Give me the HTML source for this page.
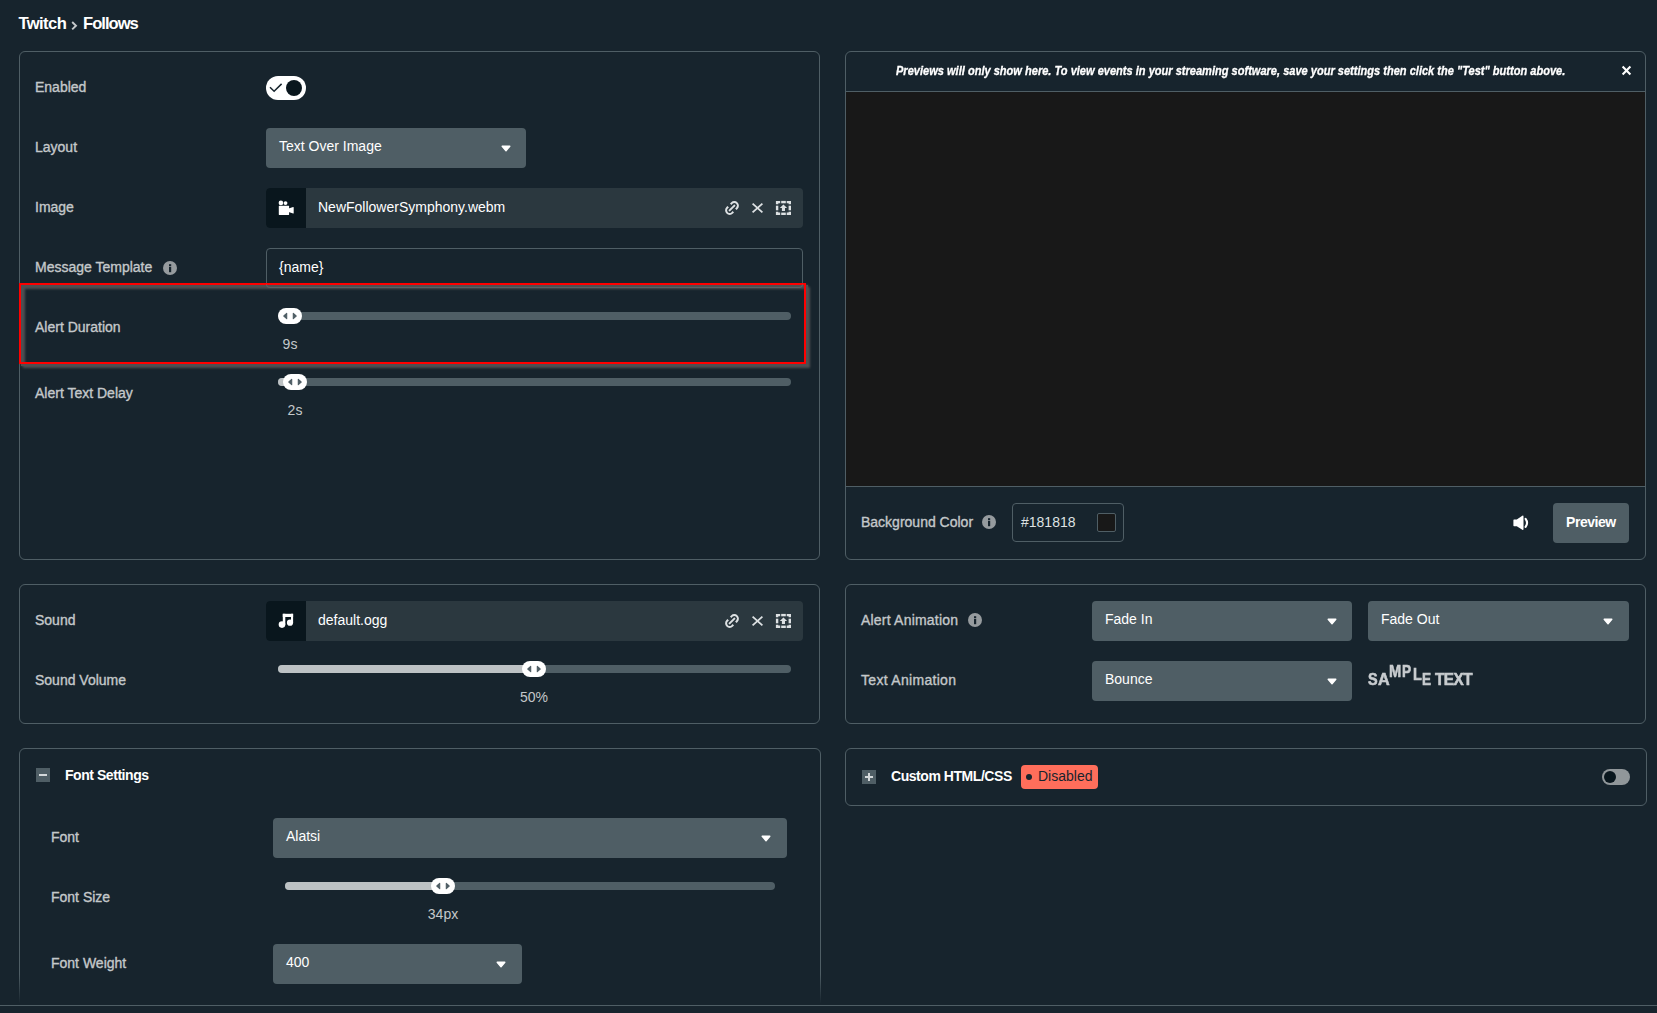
<!DOCTYPE html>
<html><head><meta charset="utf-8">
<style>
*{box-sizing:border-box;margin:0;padding:0}
html,body{width:1657px;height:1013px;overflow:hidden;background:#17242d;font-family:"Liberation Sans",sans-serif;color:#fff}
.a{position:absolute}
svg.a{overflow:visible}
.t{position:absolute;white-space:nowrap;line-height:16px;font-size:14px}
.b{font-weight:bold;letter-spacing:-0.45px}
.lbl{color:#c4c8ca;-webkit-text-stroke:0.35px #c4c8ca}
.panel{position:absolute;border:1px solid #4f5e65;border-radius:6px}
.sel{position:absolute;background:#4f5e65;border-radius:4px}
.track{position:absolute;height:8px;border-radius:4px;background:#4f5e65}
.fill{position:absolute;height:8px;border-radius:4px;background:#bdc2c4}
.knob{position:absolute;width:24px;height:16px;border-radius:8px;background:#fff}
.val{position:absolute;white-space:nowrap;line-height:16px;font-size:14px;color:#c4c8ca;text-align:center;width:60px}
.media{position:absolute;background:#2b383f;border-radius:4px}
.mico{position:absolute;left:0;top:0;width:40px;height:40px;background:#09161d;border-radius:4px 0 0 4px}
</style></head><body>

<svg width="0" height="0" style="position:absolute">
<defs>
<symbol id="caret" viewBox="0 0 10 7"><path d="M1.2 1.2 H8.8 L5 5.8 Z" fill="#fff" stroke="#fff" stroke-width="1.4" stroke-linejoin="round"/></symbol>
<symbol id="knobarrows" viewBox="0 0 24 16"><path d="M8.7 5.3 V10.7 L5.8 8 Z M15.3 5.3 V10.7 L18.2 8 Z" fill="#4f5e65" stroke="#4f5e65" stroke-width="1.1" stroke-linejoin="round"/></symbol>
<symbol id="info" viewBox="0 0 14 14"><circle cx="7" cy="7" r="7" fill="#969b9e"/><rect x="6" y="3.2" width="2.2" height="2" fill="#17242d"/><rect x="6" y="5.9" width="2.2" height="5.3" fill="#17242d"/></symbol>
<symbol id="mediaicons" viewBox="0 0 80 24">
  <g fill="none" stroke="#dde1e3" stroke-width="2" stroke-linecap="round">
    <path d="M10.7 8.2 L11.75 7.15 A3.6 3.6 0 0 1 16.85 12.25 L15.8 13.3" stroke-linecap="butt"/>
    <path d="M13.3 15.8 L12.25 16.85 A3.6 3.6 0 0 1 7.15 11.75 L8.2 10.7" stroke-linecap="butt"/>
    <path d="M9.6 14.4 L14.4 9.6"/>
    <path d="M32.6 7.6 L42.4 16.4 M42.4 7.6 L32.6 16.4" stroke-width="1.8" stroke-linecap="butt"/>
  </g>
  <g fill="#dde1e3">
    <path d="M55.9 4.9 H60.2 V7.3 H58.3 V8.2 H55.9 Z"/>
    <rect x="61.2" y="4.9" width="4.6" height="2.4"/>
    <path d="M66.7 4.9 H71 V8.2 H68.6 V7.3 H66.7 Z"/>
    <rect x="55.9" y="9.7" width="2.4" height="4.6"/>
    <rect x="68.6" y="9.7" width="2.4" height="4.6"/>
    <path d="M55.9 15.8 H58.3 V16.6 H60.2 V19 H55.9 Z"/>
    <rect x="61.2" y="16.6" width="4.6" height="2.4"/>
    <path d="M68.6 15.8 H71 V19 H66.7 V16.6 H68.6 Z"/>
    <path d="M63.45 8.5 L67.1 12.1 H65 V15 H61.9 V12.1 H59.8 Z"/>
  </g>
</symbol>
</defs>
</svg>

<!-- breadcrumb -->
<div class="t b" style="left:18.5px;top:16px;font-size:16.6px;letter-spacing:-0.6px">Twitch</div>
<svg class="a" style="left:70px;top:19.5px" width="9" height="11" viewBox="0 0 9 11"><path d="M2.2 2 L6 5.7 L2.2 9.4" fill="none" stroke="#c6c9cb" stroke-width="1.9"/></svg>
<div class="t b" style="left:83px;top:16px;font-size:16.6px;letter-spacing:-1px">Follows</div>

<!-- PANEL 1 LEFT -->
<div class="panel" style="left:19px;top:51px;width:801px;height:509px"></div>
<div class="t lbl" style="left:35px;top:79px">Enabled</div>
<div class="a" style="left:266px;top:76px;width:40px;height:24px;border-radius:12px;background:#fff"></div>
<div class="a" style="left:286px;top:80px;width:16px;height:16px;border-radius:8px;background:#09161d"></div>
<svg class="a" style="left:266px;top:76px" width="40" height="24" viewBox="0 0 40 24"><path d="M4 11.3 L8.1 15.2 L15.6 7.9" fill="none" stroke="#17242d" stroke-width="1.5"/></svg>

<div class="t lbl" style="left:35px;top:139px">Layout</div>
<div class="sel" style="left:266px;top:128px;width:260px;height:40px"></div>
<div class="t" style="left:279px;top:138px">Text Over Image</div>
<svg class="a" style="left:500.5px;top:145px" width="10" height="7"><use href="#caret"/></svg>

<div class="t lbl" style="left:35px;top:199px">Image</div>
<div class="media" style="left:266px;top:188px;width:537px;height:40px"><div class="mico"></div></div>
<svg class="a" style="left:272px;top:196px" width="28" height="24" viewBox="0 0 28 24">
  <g fill="#fff"><circle cx="8.9" cy="6.9" r="2.3"/><circle cx="13.5" cy="7.1" r="1.95"/><rect x="6.8" y="9.7" width="10.3" height="9.3" rx="0.4"/><path d="M16.6 12.6 L21.1 10.9 Q21.7 10.8 21.7 11.4 V17.1 Q21.7 17.7 21.1 17.6 L16.6 15.9 Z"/></g>
</svg>
<div class="t" style="left:318px;top:199px">NewFollowerSymphony.webm</div>
<svg class="a" style="left:720px;top:196px" width="80" height="24"><use href="#mediaicons"/></svg>

<div class="t lbl" style="left:35px;top:259px">Message Template</div>
<svg class="a" style="left:162.5px;top:261px" width="14" height="14"><use href="#info"/></svg>
<div class="a" style="left:266px;top:248px;width:537px;height:40px;border:1px solid #4f5e65;border-radius:4px"></div>
<div class="t" style="left:279px;top:259px">{name}</div>

<div class="t lbl" style="left:35px;top:319px">Alert Duration</div>
<div class="track" style="left:278px;top:312px;width:513px"></div>
<div class="knob" style="left:278px;top:308px"><svg width="24" height="16"><use href="#knobarrows"/></svg></div>
<div class="val" style="left:260px;top:336px">9s</div>

<div class="t lbl" style="left:35px;top:385px">Alert Text Delay</div>
<div class="track" style="left:278px;top:378px;width:513px"></div>
<div class="fill" style="left:278px;top:378px;width:16px"></div>
<div class="knob" style="left:283px;top:374px"><svg width="24" height="16"><use href="#knobarrows"/></svg></div>
<div class="val" style="left:265px;top:402px">2s</div>

<!-- red highlight -->
<div class="a" style="left:19px;top:283px;width:787px;height:81px;border:2px solid #f00;filter:drop-shadow(2px 2px 0px #4e4f52) drop-shadow(2px 2px 1.2px #4e4f52)"></div>

<div class="a" style="left:266px;top:284px;width:537px;height:4px;border:1px solid rgba(100,112,118,0.55);border-top:none;border-radius:0 0 4px 4px"></div>

<!-- PANEL 1 RIGHT -->
<div class="panel" style="left:845px;top:51px;width:801px;height:509px;overflow:hidden">
  <div class="a" style="left:0;top:39px;width:799px;height:396px;background:#181818;border-top:1px solid #4f5e65;border-bottom:1px solid #4f5e65"></div>
</div>
<div class="t" style="left:896px;top:63px;font-size:12px;font-weight:bold;font-style:italic;-webkit-text-stroke:0.3px #fff;transform-origin:0 0;transform:scaleX(0.921)">Previews will only show here. To view events in your streaming software, save your settings then click the "Test" button above.</div>
<svg class="a" style="left:1621px;top:65px" width="11" height="11" viewBox="0 0 11 11"><path d="M1.6 1.6 L9.4 9.4 M9.4 1.6 L1.6 9.4" stroke="#fff" stroke-width="2.1"/></svg>

<div class="t lbl" style="left:861px;top:514px">Background Color</div>
<svg class="a" style="left:981.5px;top:515px" width="14" height="14"><use href="#info"/></svg>
<div class="a" style="left:1012px;top:503px;width:112px;height:39px;border:1px solid #4f5e65;border-radius:4px"></div>
<div class="t" style="left:1021px;top:514px;color:#dfe2e3">#181818</div>
<div class="a" style="left:1097px;top:513px;width:19px;height:19px;background:#181818;border:1px solid #4f5e65;border-radius:2px"></div>
<svg class="a" style="left:1508px;top:508px" width="26" height="28" viewBox="1508 508 26 28">
  <path d="M1513.4 520.2 Q1513.4 519.6 1514 519.6 H1516.8 L1522.3 515.8 Q1523.5 515.1 1523.5 516.6 V529 Q1523.5 530.5 1522.3 529.8 L1516.8 526.2 H1514 Q1513.4 526.2 1513.4 525.6 Z" fill="#fff"/>
  <path d="M1525.6 518.9 Q1528.5 522.9 1525.6 526.9" fill="none" stroke="#fff" stroke-width="2.1" stroke-linecap="round"/>
</svg>
<div class="sel" style="left:1553px;top:503px;width:76px;height:40px"></div>
<div class="t b" style="left:1566px;top:514px">Preview</div>

<!-- PANEL 2 LEFT -->
<div class="panel" style="left:19px;top:584px;width:801px;height:140px"></div>
<div class="t lbl" style="left:35px;top:612px">Sound</div>
<div class="media" style="left:266px;top:601px;width:537px;height:40px"><div class="mico"></div></div>
<svg class="a" style="left:272px;top:608px" width="28" height="24" viewBox="0 0 28 24">
  <g fill="#fff"><circle cx="10" cy="16.6" r="3.3"/><rect x="10.8" y="5.8" width="2.5" height="10.8"/><rect x="10.8" y="5.8" width="10.3" height="3.2"/><rect x="19" y="5.8" width="2.1" height="9"/><circle cx="18" cy="14.7" r="3.1"/></g>
</svg>
<div class="t" style="left:318px;top:612px">default.ogg</div>
<svg class="a" style="left:720px;top:609px" width="80" height="24"><use href="#mediaicons"/></svg>
<div class="t lbl" style="left:35px;top:672px">Sound Volume</div>
<div class="track" style="left:278px;top:665px;width:513px"></div>
<div class="fill" style="left:278px;top:665px;width:256px"></div>
<div class="knob" style="left:522px;top:661px"><svg width="24" height="16"><use href="#knobarrows"/></svg></div>
<div class="val" style="left:504px;top:689px">50%</div>

<!-- PANEL 2 RIGHT -->
<div class="panel" style="left:845px;top:584px;width:801px;height:140px"></div>
<div class="t lbl" style="left:861px;top:612px;letter-spacing:0.2px">Alert Animation</div>
<svg class="a" style="left:967.5px;top:613px" width="14" height="14"><use href="#info"/></svg>
<div class="sel" style="left:1092px;top:601px;width:260px;height:40px"></div>
<div class="t" style="left:1105px;top:611px">Fade In</div>
<svg class="a" style="left:1326.5px;top:618px" width="10" height="7"><use href="#caret"/></svg>
<div class="sel" style="left:1368px;top:601px;width:261px;height:40px"></div>
<div class="t" style="left:1381px;top:611px">Fade Out</div>
<svg class="a" style="left:1602.5px;top:618px" width="10" height="7"><use href="#caret"/></svg>
<div class="t lbl" style="left:861px;top:672px;letter-spacing:0.3px">Text Animation</div>
<div class="sel" style="left:1092px;top:661px;width:260px;height:40px"></div>
<div class="t" style="left:1105px;top:671px">Bounce</div>
<svg class="a" style="left:1326.5px;top:678px" width="10" height="7"><use href="#caret"/></svg>
<div class="a" style="left:0;top:0;color:#c8cccf">
  <div class="t" style="left:1368px;top:670px;font-size:17px;line-height:20px;font-weight:bold;-webkit-text-stroke:0.6px #c8cccf;transform:scaleX(0.85);transform-origin:0 0">S</div>
  <div class="t" style="left:1378px;top:670px;font-size:17px;line-height:20px;font-weight:bold;-webkit-text-stroke:0.6px #c8cccf;transform:scaleX(0.95);transform-origin:0 0">A</div>
  <div class="t" style="left:1389px;top:662px;font-size:17px;line-height:20px;font-weight:bold;-webkit-text-stroke:0.6px #c8cccf;transform:scaleX(0.86);transform-origin:0 0">M</div>
  <div class="t" style="left:1402px;top:662px;font-size:17px;line-height:20px;font-weight:bold;-webkit-text-stroke:0.6px #c8cccf;transform:scaleX(0.8);transform-origin:0 0">P</div>
  <div class="t" style="left:1413px;top:665px;font-size:17px;line-height:20px;font-weight:bold;-webkit-text-stroke:0.6px #c8cccf;transform:scaleX(0.85);transform-origin:0 0">L</div>
  <div class="t" style="left:1421.5px;top:670px;font-size:17px;line-height:20px;font-weight:bold;-webkit-text-stroke:0.6px #c8cccf;transform:scaleX(0.8);transform-origin:0 0">E</div>
  <div class="t" style="left:1435px;top:670px;font-size:17px;line-height:20px;font-weight:bold;-webkit-text-stroke:0.6px #c8cccf;transform:scaleX(0.9);transform-origin:0 0;letter-spacing:-0.6px">TEXT</div>
</div>

<!-- PANEL 3 LEFT (clipped) -->
<div class="a" style="left:0;top:0;width:1657px;height:1005px;overflow:hidden">
<div class="panel" style="left:19px;top:748px;width:802px;height:400px"></div>
<div class="a" style="left:36px;top:768px;width:14px;height:14px;background:#4f5e65"></div>
<div class="a" style="left:39px;top:774px;width:8px;height:2px;background:#d4d8da"></div>
<div class="t b" style="left:65px;top:767px">Font Settings</div>
<div class="t lbl" style="left:51px;top:829px">Font</div>
<div class="sel" style="left:273px;top:818px;width:514px;height:40px"></div>
<div class="t" style="left:286px;top:828px">Alatsi</div>
<svg class="a" style="left:760.5px;top:835px" width="10" height="7"><use href="#caret"/></svg>
<div class="t lbl" style="left:51px;top:889px">Font Size</div>
<div class="track" style="left:285px;top:882px;width:490px"></div>
<div class="fill" style="left:285px;top:882px;width:158px"></div>
<div class="knob" style="left:431px;top:878px"><svg width="24" height="16"><use href="#knobarrows"/></svg></div>
<div class="val" style="left:413px;top:906px">34px</div>
<div class="t lbl" style="left:51px;top:955px">Font Weight</div>
<div class="sel" style="left:273px;top:944px;width:249px;height:40px"></div>
<div class="t" style="left:286px;top:954px">400</div>
<svg class="a" style="left:495.5px;top:961px" width="10" height="7"><use href="#caret"/></svg>
<div class="a" style="left:19px;top:974px;width:1px;height:31px;background:linear-gradient(#4f5e65,#17242d 95%)"></div>
<div class="a" style="left:820px;top:974px;width:1px;height:31px;background:linear-gradient(#4f5e65,#17242d 95%)"></div>
</div>

<!-- PANEL 3 RIGHT -->
<div class="panel" style="left:845px;top:748px;width:802px;height:58px"></div>
<div class="a" style="left:862px;top:770px;width:14px;height:14px;background:#4f5e65"></div>
<div class="a" style="left:865px;top:776px;width:8px;height:2px;background:#d4d8da"></div>
<div class="a" style="left:868px;top:773px;width:2px;height:8px;background:#d4d8da"></div>
<div class="t b" style="left:891px;top:768px">Custom HTML/CSS</div>
<div class="a" style="left:1021px;top:765px;width:77px;height:24px;border-radius:4px;background:#ff6e5b"></div>
<div class="a" style="left:1026px;top:774px;width:6px;height:6px;border-radius:3px;background:#17242d"></div>
<div class="t" style="left:1038px;top:768px;color:#17242d">Disabled</div>
<div class="a" style="left:1602px;top:769px;width:28px;height:16px;border-radius:8px;background:#91979a"></div>
<div class="a" style="left:1604px;top:771px;width:12px;height:12px;border-radius:6px;background:#09161d"></div>

<!-- footer line -->
<div class="a" style="left:0;top:1005px;width:1657px;height:1px;background:#4f5e65"></div>

</body></html>
